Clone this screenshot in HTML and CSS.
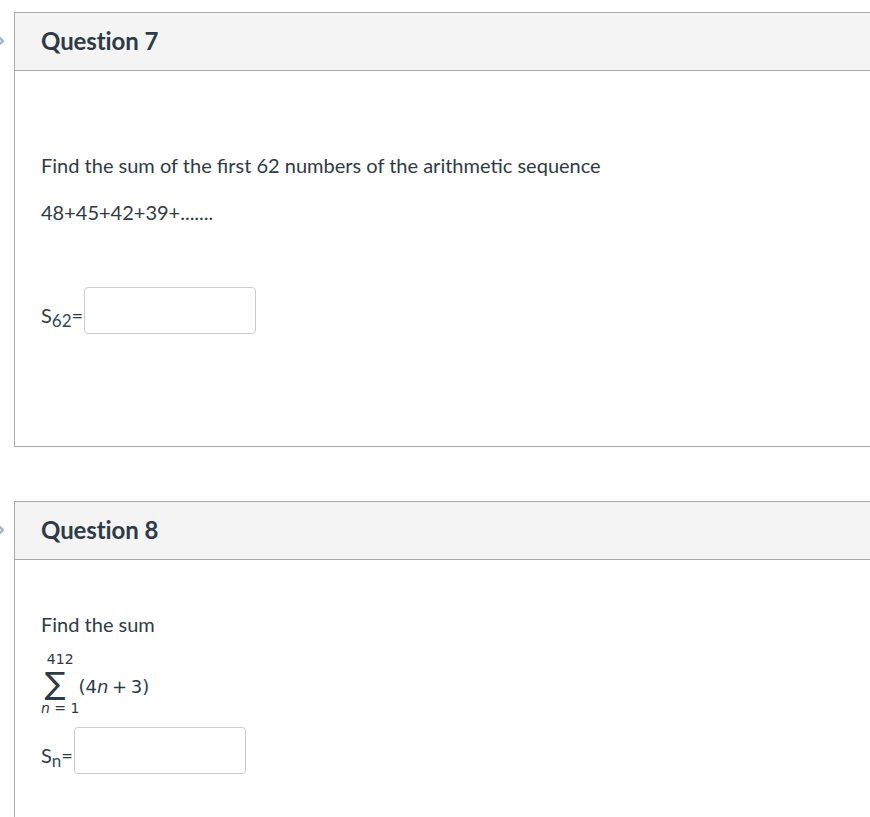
FILE: index.html
```html
<!DOCTYPE html>
<html>
<head>
<meta charset="utf-8">
<link rel="stylesheet" href="styles.css">
</head>
<body>
<div class="page">
  <div class="question-row">
    <div class="marker">
      <svg width="14" height="58" viewBox="0 0 14 58"><path d="M-3 23.5 L3 29 L-3 34.5" fill="none" stroke="#a3b8c9" stroke-width="2.4" stroke-linejoin="round"/></svg>
    </div>
    <div class="question q7">
      <div class="q-header"><h2 class="q-title">Question 7</h2></div>
      <div class="q-body q7-body">
        <p class="q-text">Find the sum of the first 62 numbers of the arithmetic sequence</p>
        <p class="q-text">48+45+42+39+.......</p>
        <div class="answer-row q7-answer">
          <span class="ans-label">S<sub class="sub">62</sub>=</span>
          <input class="ans-input" type="text">
        </div>
      </div>
    </div>
  </div>

  <div class="question-row second">
    <div class="marker">
      <svg width="14" height="58" viewBox="0 0 14 58"><path d="M-3 23.5 L3 29 L-3 34.5" fill="none" stroke="#a3b8c9" stroke-width="2.4" stroke-linejoin="round"/></svg>
    </div>
    <div class="question q8">
      <div class="q-header"><h2 class="q-title">Question 8</h2></div>
      <div class="q-body q8-body">
        <p class="q-text">Find the sum</p>
        <div class="math">
          <span class="sigma-stack">
            <span class="lim">412</span>
            <span class="sigma">∑</span>
            <span class="lim low"><i>n</i> = 1</span>
          </span>
          <span class="summand">(4<i>n</i> + 3)</span>
        </div>
        <div class="answer-row q8-answer">
          <span class="ans-label">S<sub class="sub">n</sub>=</span>
          <input class="ans-input" type="text">
        </div>
      </div>
    </div>
  </div>
</div>
</body>
</html>
```

FILE: styles.css
```css
html, body {
  margin: 0;
  padding: 0;
  background: #ffffff;
}
body {
  font-family: Lato, "Open Sans", sans-serif;
  color: #2d3b45;
  overflow: hidden;
}
.page {
  padding-top: 12px;
}
.question-row {
  display: flex;
  align-items: flex-start;
}
.question-row.second {
  margin-top: 54px;
}
.marker {
  width: 14px;
  flex: 0 0 14px;
  height: 58px;
}
.marker svg {
  display: block;
}
.question {
  flex: 1;
  border: 1px solid #a9a9a9;
  border-right: none;
}
.q8 {
  border-bottom: none;
}
.q-header {
  height: 57px;
  background: #f4f4f4;
  border-bottom: 1px solid #a9a9a9;
  display: flex;
  align-items: center;
  padding-left: 26px;
}
.q-title {
  margin: 0 0 2px 0;
  font-size: 24px;
  font-weight: 700;
  color: #2d3b45;
  letter-spacing: -0.1px;
}
.q-body {
  padding-left: 26px;
}
.q7-body {
  padding-top: 81px;
  height: 294px;
}
.q8-body {
  padding-top: 51px;
  height: 300px;
}
.q-text {
  margin: 0 0 20px 0;
  font-size: 20px;
  line-height: 27px;
}
.answer-row {
  display: flex;
  align-items: center;
}
.q7-answer {
  margin-top: 61px;
}
.q8-answer {
  margin-top: 11px;
}
.ans-label {
  font-size: 20px;
  line-height: 27px;
  padding-top: 10px;
  white-space: nowrap;
}
.sub {
  font-size: 17px;
  vertical-align: -4px;
  line-height: 0;
  color: #2b4a66;
}
.ans-input {
  width: 172px;
  height: 47px;
  box-sizing: border-box;
  border: 1px solid #c7cdd1;
  border-radius: 4px;
  margin: 0 0 0 1px;
  padding: 0;
  background: #fff;
}
.math {
  display: flex;
  align-items: center;
  margin-top: -6px;
}
.sigma-stack {
  display: flex;
  flex-direction: column;
  align-items: center;
  font-family: "DejaVu Sans", sans-serif;
}
.lim {
  font-size: 14px;
  line-height: 15px;
}
.lim i {
  font-style: italic;
}
.sigma {
  font-size: 31px;
  line-height: 30px;
  margin-top: 1px;
  margin-bottom: 3px;
  margin-right: 10px;
}
.summand {
  font-family: "DejaVu Sans", sans-serif;
  font-size: 18px;
  margin-left: -1px;
  margin-top: 5px;
  word-spacing: -2px;
}
```
